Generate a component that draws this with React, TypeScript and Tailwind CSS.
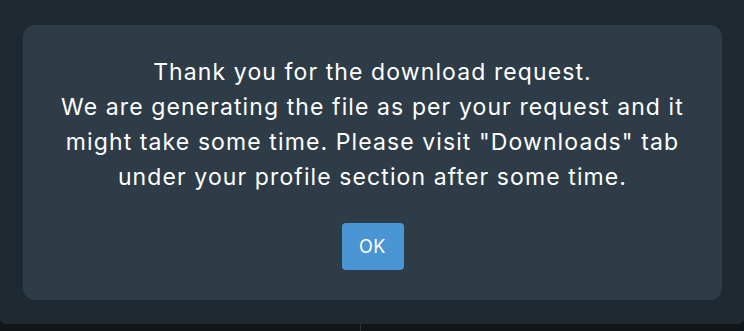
export default function App() {
  const font = { fontFamily: 'Inter, "Noto Sans", sans-serif' };
  return (
    <div className="w-[744px] h-[331px] bg-[#0f1519] flex flex-col overflow-hidden" style={font}>
      <div className="h-[324px] w-[744px] bg-[#1e2931] rounded-b-[5px] pt-[25px] pl-[23px] pr-[22px] pb-[24px] flex">
        <div className="flex-1 bg-[#2d3c47] rounded-[12px] flex flex-col items-center pt-[30px]">
          <p className="text-white text-[23px] leading-[35px] text-center tracking-[1.1px]">
            <span className="block">Thank you for the download request.</span>
            <span className="block">We are generating the file as per your request and it</span>
            <span className="block">might take some time. Please visit "Downloads" tab</span>
            <span className="block">under your profile section after some time.</span>
          </p>
          <button className="mt-[28px] w-[62px] h-[47px] rounded-[4px] bg-[#4a95d3] text-white text-[18px] tracking-[0.5px]">
            OK
          </button>
        </div>
      </div>
      <div className="flex-1 flex">
        <div className="w-[360px]"></div>
        <div className="w-px bg-[#2a3338]"></div>
      </div>
    </div>
  );
}
